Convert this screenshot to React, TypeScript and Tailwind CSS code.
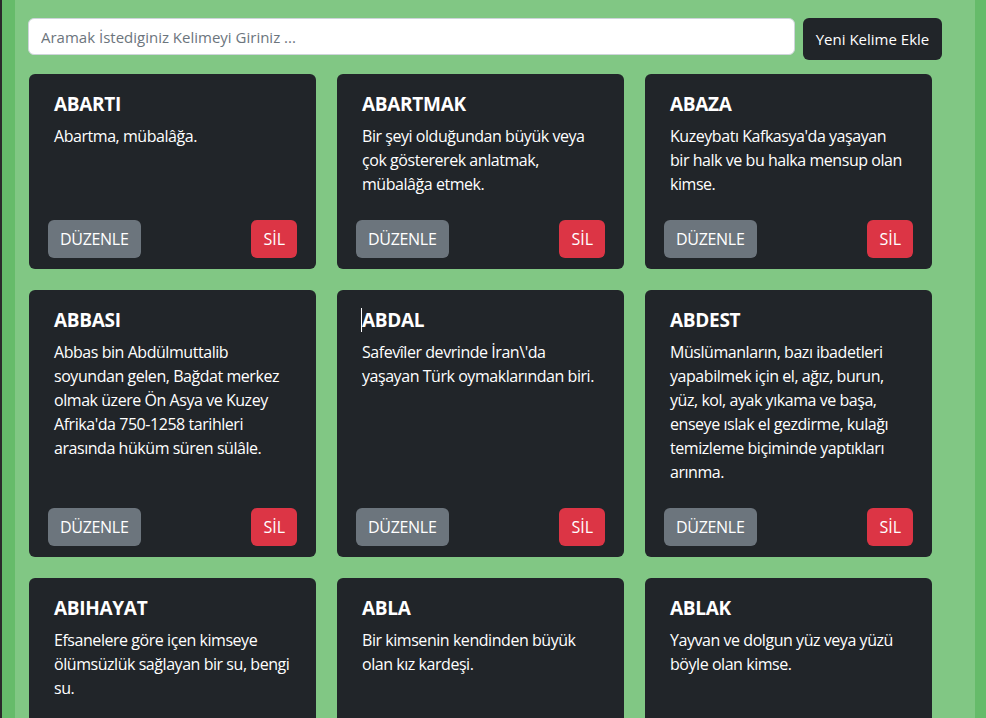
const words = [
  { title: "ABARTI", desc: "Abartma, mübalâğa." },
  { title: "ABARTMAK", desc: "Bir şeyi olduğundan büyük veya çok göstererek anlatmak, mübalâğa etmek." },
  { title: "ABAZA", desc: "Kuzeybatı Kafkasya'da yaşayan bir halk ve bu halka mensup olan kimse." },
  {
    title: "ABBASI",
    desc: "Abbas bin Abdülmuttalib soyundan gelen, Bağdat merkez olmak üzere Ön Asya ve Kuzey Afrika'da 750-1258 tarihleri arasında hüküm süren sülâle.",
  },
  { title: "ABDAL", desc: "Safevîler devrinde İran\\'da yaşayan Türk oymaklarından biri.", caret: true },
  {
    title: "ABDEST",
    desc: "Müslümanların, bazı ibadetleri yapabilmek için el, ağız, burun, yüz, kol, ayak yıkama ve başa, enseye ıslak el gezdirme, kulağı temizleme biçiminde yaptıkları arınma.",
  },
  { title: "ABIHAYAT", desc: "Efsanelere göre içen kimseye ölümsüzlük sağlayan bir su, bengi su." },
  { title: "ABLA", desc: "Bir kimsenin kendinden büyük olan kız kardeşi." },
  { title: "ABLAK", desc: "Yayvan ve dolgun yüz veya yüzü böyle olan kimse." },
];

function WordCard({ w }: { w: { title: string; desc: string; caret?: boolean } }) {
  return (
    <div className="flex flex-col rounded-[6px] bg-[#212529] text-white">
      <div className="px-[25px] pt-[18px]">
        <h5 className="mb-2 flex items-center text-[19px] font-bold leading-[24px] tracking-[-0.3px]">
          {w.caret && <span className="-ml-px inline-block h-[24px] w-px bg-white" />}
          {w.title}
        </h5>
        <p className="text-[16px] leading-[24px] tracking-[-0.45px]">{w.desc}</p>
      </div>
      <div className="mt-auto flex items-center justify-between px-[19px] pb-[11px] pt-[24px]">
        <button className="h-[38px] rounded-[6px] bg-[#6c757d] px-3 text-[16px] tracking-[-0.3px] text-white">
          DÜZENLE
        </button>
        <button className="h-[38px] rounded-[6px] bg-[#dc3545] px-3 text-[16px] text-white">SİL</button>
      </div>
    </div>
  );
}

export default function App() {
  return (
    <div className="flex min-h-[718px] font-['Open_Sans',sans-serif] text-[15px]">
      <div className="w-[2px] bg-[#2a2a2a]" />
      <div className="w-[13px] bg-[#66bb6a]" />
      <main className="flex-1 bg-[#81c784] pl-[13px] pt-[18px]">
        <div className="flex items-start gap-2">
          <input
            className="h-[37px] w-[767px] rounded-[6px] border border-[#ced4da] bg-white px-3 text-[15px] placeholder:text-[#6c757d]"
            placeholder="Aramak İstediginiz Kelimeyi Giriniz ..."
          />
          <button className="h-[42px] w-[139px] rounded-[6px] bg-[#212529] text-[15px] text-white">
            Yeni Kelime Ekle
          </button>
        </div>
        <div className="ml-px mt-[14px] grid w-[903px] grid-cols-3 gap-[21px]">
          {words.map((w) => (
            <WordCard key={w.title} w={w} />
          ))}
        </div>
      </main>
      <div className="w-[11px] bg-[#66bb6a]" />
    </div>
  );
}
